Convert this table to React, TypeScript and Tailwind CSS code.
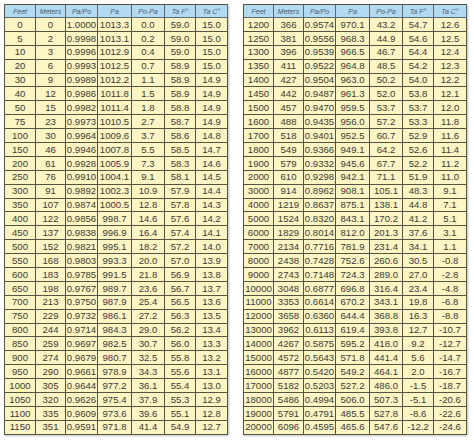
import React from "react";

const left: string[][] = [
  ["0", "0", "1.0000", "1013.3", "0.0", "59.0", "15.0"],
  ["5", "2", "0.9998", "1013.1", "0.2", "59.0", "15.0"],
  ["10", "3", "0.9996", "1012.9", "0.4", "59.0", "15.0"],
  ["20", "6", "0.9993", "1012.5", "0.7", "58.9", "15.0"],
  ["30", "9", "0.9989", "1012.2", "1.1", "58.9", "14.9"],
  ["40", "12", "0.9986", "1011.8", "1.5", "58.9", "14.9"],
  ["50", "15", "0.9982", "1011.4", "1.8", "58.8", "14.9"],
  ["75", "23", "0.9973", "1010.5", "2.7", "58.7", "14.9"],
  ["100", "30", "0.9964", "1009.6", "3.7", "58.6", "14.8"],
  ["150", "46", "0.9946", "1007.8", "5.5", "58.5", "14.7"],
  ["200", "61", "0.9928", "1005.9", "7.3", "58.3", "14.6"],
  ["250", "76", "0.9910", "1004.1", "9.1", "58.1", "14.5"],
  ["300", "91", "0.9892", "1002.3", "10.9", "57.9", "14.4"],
  ["350", "107", "0.9874", "1000.5", "12.8", "57.8", "14.3"],
  ["400", "122", "0.9856", "998.7", "14.6", "57.6", "14.2"],
  ["450", "137", "0.9838", "996.9", "16.4", "57.4", "14.1"],
  ["500", "152", "0.9821", "995.1", "18.2", "57.2", "14.0"],
  ["550", "168", "0.9803", "993.3", "20.0", "57.0", "13.9"],
  ["600", "183", "0.9785", "991.5", "21.8", "56.9", "13.8"],
  ["650", "198", "0.9767", "989.7", "23.6", "56.7", "13.7"],
  ["700", "213", "0.9750", "987.9", "25.4", "56.5", "13.6"],
  ["750", "229", "0.9732", "986.1", "27.2", "56.3", "13.5"],
  ["800", "244", "0.9714", "984.3", "29.0", "56.2", "13.4"],
  ["850", "259", "0.9697", "982.5", "30.7", "56.0", "13.3"],
  ["900", "274", "0.9679", "980.7", "32.5", "55.8", "13.2"],
  ["950", "290", "0.9661", "978.9", "34.3", "55.6", "13.1"],
  ["1000", "305", "0.9644", "977.2", "36.1", "55.4", "13.0"],
  ["1050", "320", "0.9626", "975.4", "37.9", "55.3", "12.9"],
  ["1100", "335", "0.9609", "973.6", "39.6", "55.1", "12.8"],
  ["1150", "351", "0.9591", "971.8", "41.4", "54.9", "12.7"],
];

const right: string[][] = [
  ["1200", "366", "0.9574", "970.1", "43.2", "54.7", "12.6"],
  ["1250", "381", "0.9556", "968.3", "44.9", "54.6", "12.5"],
  ["1300", "396", "0.9539", "966.5", "46.7", "54.4", "12.4"],
  ["1350", "411", "0.9522", "964.8", "48.5", "54.2", "12.3"],
  ["1400", "427", "0.9504", "963.0", "50.2", "54.0", "12.2"],
  ["1450", "442", "0.9487", "961.3", "52.0", "53.8", "12.1"],
  ["1500", "457", "0.9470", "959.5", "53.7", "53.7", "12.0"],
  ["1600", "488", "0.9435", "956.0", "57.2", "53.3", "11.8"],
  ["1700", "518", "0.9401", "952.5", "60.7", "52.9", "11.6"],
  ["1800", "549", "0.9366", "949.1", "64.2", "52.6", "11.4"],
  ["1900", "579", "0.9332", "945.6", "67.7", "52.2", "11.2"],
  ["2000", "610", "0.9298", "942.1", "71.1", "51.9", "11.0"],
  ["3000", "914", "0.8962", "908.1", "105.1", "48.3", "9.1"],
  ["4000", "1219", "0.8637", "875.1", "138.1", "44.8", "7.1"],
  ["5000", "1524", "0.8320", "843.1", "170.2", "41.2", "5.1"],
  ["6000", "1829", "0.8014", "812.0", "201.3", "37.6", "3.1"],
  ["7000", "2134", "0.7716", "781.9", "231.4", "34.1", "1.1"],
  ["8000", "2438", "0.7428", "752.6", "260.6", "30.5", "-0.8"],
  ["9000", "2743", "0.7148", "724.3", "289.0", "27.0", "-2.8"],
  ["10000", "3048", "0.6877", "696.8", "316.4", "23.4", "-4.8"],
  ["11000", "3353", "0.6614", "670.2", "343.1", "19.8", "-6.8"],
  ["12000", "3658", "0.6360", "644.4", "368.8", "16.3", "-8.8"],
  ["13000", "3962", "0.6113", "619.4", "393.8", "12.7", "-10.7"],
  ["14000", "4267", "0.5875", "595.2", "418.0", "9.2", "-12.7"],
  ["15000", "4572", "0.5643", "571.8", "441.4", "5.6", "-14.7"],
  ["16000", "4877", "0.5420", "549.2", "464.1", "2.0", "-16.7"],
  ["17000", "5182", "0.5203", "527.2", "486.0", "-1.5", "-18.7"],
  ["18000", "5486", "0.4994", "506.0", "507.3", "-5.1", "-20.6"],
  ["19000", "5791", "0.4791", "485.5", "527.8", "-8.6", "-22.6"],
  ["20000", "6096", "0.4595", "465.6", "547.6", "-12.2", "-24.6"],
];

const headers = ["Feet", "Meters", "Pa/Po", "Pa", "Po-Pa", "Ta F°", "Ta C°"];

function DataTable({ rows, cols }: { rows: string[][]; cols: string }) {
  return (
    <div
      className={`grid ${cols} border-l border-t border-[#55553f] shadow-[1px_1px_2px_rgba(0,0,0,0.25)]`}
    >
      {headers.map((h) => (
        <div
          key={h}
          className="flex h-[13px] items-center justify-center border-b border-r border-[#5d6a72] bg-[#b3daf3] text-[7px] italic leading-none text-[#4b5966]"
        >
          {h}
        </div>
      ))}
      {rows.map((r, i) =>
        r.map((c, j) => (
          <div
            key={`${i}-${j}`}
            className="flex h-[13.9px] items-center justify-center border-b border-r border-[#55553f] bg-[#fdf5c4] text-[9.6px] leading-none text-[#3a3a33]"
          >
            {c}
          </div>
        ))
      )}
    </div>
  );
}

export default function App() {
  return (
    <div
      className="flex h-[440px] w-[474px] items-start gap-[15px] bg-white pl-[4px] pt-[4px]"
      style={{ fontFamily: '"Liberation Sans", Arial, sans-serif' }}
    >
      <DataTable rows={left} cols="grid-cols-[31px_30px_32px_34px_33px_31px_32px]" />
      <DataTable rows={right} cols="grid-cols-[30px_30px_32px_34px_33px_31px_33px]" />
    </div>
  );
}
